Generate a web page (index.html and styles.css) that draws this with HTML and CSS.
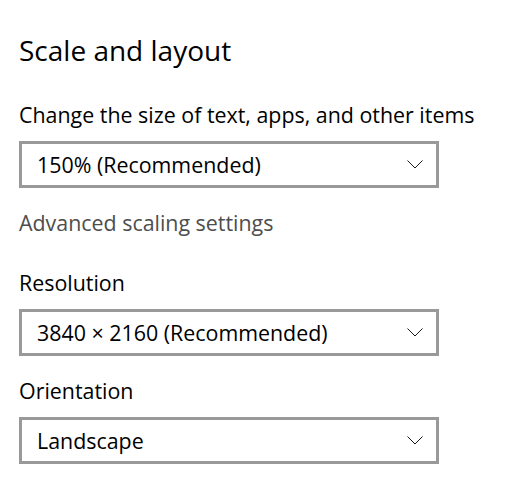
FILE: index.html
```html
<!DOCTYPE html>
<html lang="en">
<head>
<meta charset="utf-8">
<title>Scale and layout</title>
<link rel="stylesheet" href="styles.css">
</head>
<body>
<main class="page">
  <h1 class="title">Scale and layout</h1>

  <div class="label label-first">Change the size of text, apps, and other items</div>
  <div class="combo">
    <span class="combo-value">150% (Recommended)</span>
    <svg class="chevron" width="16" height="9" viewBox="0 0 16 9" aria-hidden="true"><polyline points="0.5,0.5 8,8 15.5,0.5" fill="none" stroke="#1a1a1a" stroke-width="1"/></svg>
  </div>

  <a class="link" href="#">Advanced scaling settings</a>

  <div class="label label-res">Resolution</div>
  <div class="combo">
    <span class="combo-value">3840 × 2160 (Recommended)</span>
    <svg class="chevron" width="16" height="9" viewBox="0 0 16 9" aria-hidden="true"><polyline points="0.5,0.5 8,8 15.5,0.5" fill="none" stroke="#1a1a1a" stroke-width="1"/></svg>
  </div>

  <div class="label label-orient">Orientation</div>
  <div class="combo">
    <span class="combo-value">Landscape</span>
    <svg class="chevron" width="16" height="9" viewBox="0 0 16 9" aria-hidden="true"><polyline points="0.5,0.5 8,8 15.5,0.5" fill="none" stroke="#1a1a1a" stroke-width="1"/></svg>
  </div>
</main>
</body>
</html>
```

FILE: styles.css
```css
html, body {
  margin: 0;
  padding: 0;
  background: #ffffff;
}

body {
  font-family: "Open Sans", "Noto Sans", sans-serif;
  color: #000000;
}

.page {
  display: flex;
  flex-direction: column;
  align-items: flex-start;
  padding: 32px 0 0 19px;
}

.title {
  margin: 0;
  font-size: 28px;
  font-weight: 400;
  line-height: 36px;
  height: 36px;
  white-space: nowrap;
}

.label {
  font-size: 21.4px;
  line-height: 30px;
  height: 30px;
  white-space: nowrap;
}

.label-first { margin-top: 32px; }
.label-res { margin-top: 30px; }
.label-orient { margin-top: 20px; }

.combo {
  box-sizing: border-box;
  width: 420px;
  height: 47px;
  margin-top: 11px;
  border: 3px solid #999999;
  background: #ffffff;
  display: flex;
  align-items: center;
  justify-content: space-between;
  padding: 0 13px 0 15px;
}

.combo-value {
  font-size: 21.4px;
  line-height: 41px;
  white-space: nowrap;
}

.chevron {
  display: block;
  flex: none;
}

.link {
  margin-top: 20px;
  font-size: 21.4px;
  line-height: 30px;
  height: 30px;
  color: #4d4d4d;
  text-decoration: none;
  white-space: nowrap;
}
```
